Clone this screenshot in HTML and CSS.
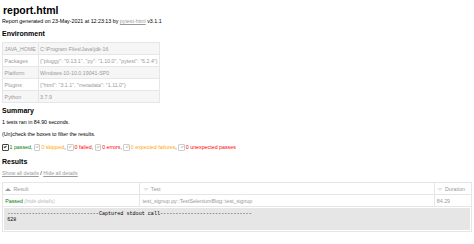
FILE: index.html
```html
<!DOCTYPE html>
<html lang="en">
  <head>
    <meta charset="UTF-8" />
    <title>report.html</title>
    <link rel="stylesheet" href="styles.css">
  </head>
  <body>
    <h1>report.html</h1>
    <p>Report generated on 23-May-2021 at 12:23:13 by <a href="#">pytest-html</a> v3.1.1</p>
    <h2>Environment</h2>
    <table id="environment">
      <tr><td>JAVA_HOME</td><td>C:\Program Files\Java\jdk-16</td></tr>
      <tr><td>Packages</td><td>{"pluggy": "0.13.1", "py": "1.10.0", "pytest": "6.2.4"}</td></tr>
      <tr><td>Platform</td><td>Windows-10-10.0.19041-SP0</td></tr>
      <tr><td>Plugins</td><td>{"html": "3.1.1", "metadata": "1.11.0"}</td></tr>
      <tr><td>Python</td><td>3.7.9</td></tr>
    </table>
    <h2 class="summary-title">Summary</h2>
    <p class="run-time">1 tests ran in 84.90 seconds. </p>
    <p class="filter-note">(Un)check the boxes to filter the results.</p>
    <p class="filters">
      <span class="check on"></span><span class="passed">1 passed</span>,
      <span class="check"></span><span class="skipped">0 skipped</span>,
      <span class="check"></span><span class="failed">0 failed</span>,
      <span class="check"></span><span class="error">0 errors</span>,
      <span class="check"></span><span class="xfailed">0 expected failures</span>,
      <span class="check"></span><span class="xpassed">0 unexpected passes</span>
    </p>
    <h2 class="results-title">Results</h2>
    <p class="toggles"><a href="#">Show all details</a> / <a href="#">Hide all details</a></p>
    <table id="results-table">
      <thead>
        <tr>
          <th class="col-result"><span class="sort-icon asc"></span>Result</th>
          <th class="col-name"><span class="sort-icon"></span>Test</th>
          <th class="col-duration"><span class="sort-icon"></span>Duration</th>
        </tr>
      </thead>
      <tbody class="results-table-row passed">
        <tr>
          <td class="col-result">Passed<span class="expander"> (hide details)</span></td>
          <td class="col-name">test_signup.py::TestSeleniumBlog::test_signup</td>
          <td class="col-duration">84.29</td>
        </tr>
        <tr>
          <td class="extra" colspan="3"><div class="log">------------------------------Captured stdout call------------------------------
628</div></td>
        </tr>
      </tbody>
    </table>
  </body>
</html>
```

FILE: styles.css
```css
body {
  font-family: Helvetica, "Liberation Sans", Arial, sans-serif;
  font-size: 5.3px;
  color: #999;
  margin: 2px 2px 0 2px;
  background: #fff;
}
h1 {
  font-size: 10.5px;
  line-height: 12px;
  color: black;
  margin: 2px 0 0 1px;
}
h2 {
  font-size: 7px;
  line-height: 9px;
  color: black;
  margin: 4px 0 0 0;
}
h2.summary-title {
  margin-top: 3px;
}
h2.results-title {
  margin-top: 6px;
}
p {
  color: black;
  margin: 2px 0 0 0;
  line-height: 7px;
}
p.run-time {
  margin-top: 4px;
}
.filter-note {
  margin-top: 5px;
}
a {
  color: #999;
}
table {
  border-collapse: collapse;
}
#environment {
  margin-top: 4px;
}
#environment td {
  padding: 0 1.6px;
  height: 11px;
  line-height: 6px;
  border: 1px solid #e6e6e6;
}
#environment tr:nth-child(odd) {
  background-color: #f6f6f6;
}
.filters {
  margin-top: 6px;
}
.check {
  display: inline-block;
  width: 4.5px;
  height: 4.5px;
  border: 1px solid #ccc;
  border-radius: 1px;
  margin-right: 1px;
  vertical-align: -1.5px;
  position: relative;
}
.check::after {
  content: "";
  position: absolute;
  left: 1.4px;
  top: 0;
  width: 1px;
  height: 2.4px;
  border-right: 1px solid #ccc;
  border-bottom: 1px solid #ccc;
  transform: rotate(45deg);
}
.check.on {
  border-color: #444;
}
.check.on::after {
  border-color: #444;
}
span.passed,
.passed td.col-result {
  color: green;
}
.skipped,
.xfailed {
  color: orange;
}
.failed,
.error,
.xpassed {
  color: red;
}
.toggles {
  margin-top: 4px;
}
#results-table {
  width: 100%;
  margin-top: 5px;
  border: 1px solid #e6e6e6;
  color: #999;
}
#results-table th,
#results-table td {
  padding: 0 2.2px;
  height: 11px;
  line-height: 6px;
  border: 1px solid #e6e6e6;
  text-align: left;
  font-weight: normal;
}
.col-result {
  width: 132px;
}
.col-duration {
  width: 32px;
}
.sort-icon {
  display: inline-block;
  width: 0;
  height: 0;
  border-left: 3px solid transparent;
  border-right: 3px solid transparent;
  border-top: 3px solid #e6e6e6;
  margin-right: 2.2px;
  vertical-align: 0;
}
.sort-icon.asc {
  border-top: none;
  border-bottom: 3px solid #999;
}
.expander {
  color: #bbb;
  font-style: italic;
}
#results-table td.extra {
  padding: 1px;
  height: auto;
}
.log {
  background-color: #e6e6e6;
  border: 1px solid #e6e6e6;
  color: black;
  font-family: "Courier New", "Liberation Mono", monospace;
  font-size: 5.1px;
  line-height: 6px;
  height: 15.6px;
  padding: 2.2px;
  white-space: pre-wrap;
}
```
